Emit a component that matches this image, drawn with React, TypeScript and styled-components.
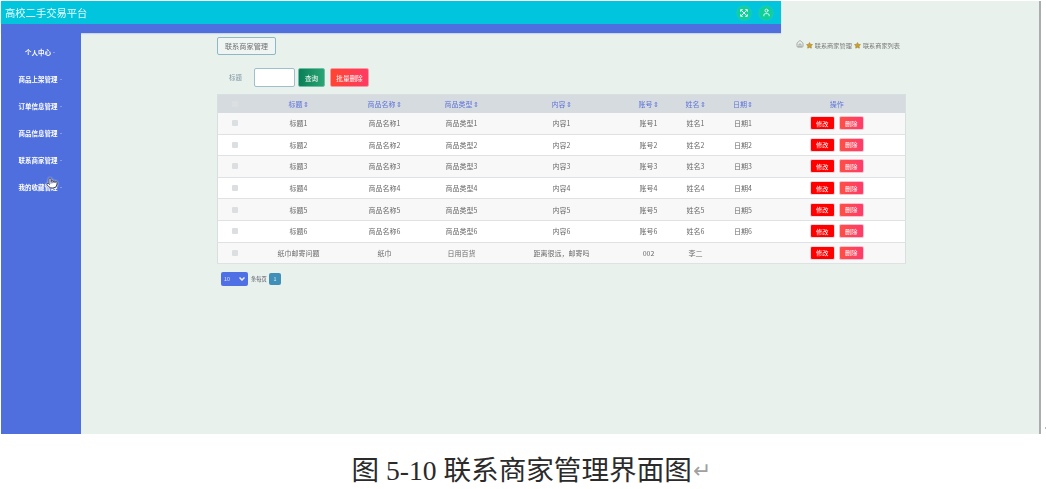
import React from 'react';
import styled, { createGlobalStyle } from 'styled-components';
import { House, Pointer, Star, User } from 'lucide-react';

const sans = '"Noto Sans CJK SC", "Noto Sans", sans-serif';

const GlobalStyle = createGlobalStyle`
  body {
    margin: 0;
    background: #fff;
    font-family: ${sans};
  }
`;

const Page = styled.div`
  width: 1046px;
  height: 489px;
  overflow: hidden;
  position: relative;
`;

const Shot = styled.div`
  width: 1040px;
  height: 433px;
  margin: 1px 0 0 1px;
  box-sizing: border-box;
  display: flex;
  flex-direction: column;
  background: #e8f1ec;
  border-right: 2px solid #a9adab;
  filter: blur(0.45px);
  position: relative;
`;

const Header = styled.header`
  width: 780px;
  height: 32px;
  flex: none;
  box-sizing: border-box;
  background: #4f6fdf;
  box-shadow: 0 1px 1px #c9d6ea;
`;

const HeaderBar = styled.div`
  height: 23px;
  background: #00c5dc;
  display: flex;
  align-items: center;
  padding: 0 8px 0 4px;
  gap: 8px;
`;

const Brand = styled.div`
  flex: 1;
  color: #fff;
  font-size: 10.3px;
  font-weight: 400;
  opacity: 0.92;
`;

const RoundIcon = styled.span`
  width: 14px;
  height: 14px;
  border-radius: 50%;
  background: #10d09a;
  color: #fff;
  display: flex;
  align-items: center;
  justify-content: center;
  box-shadow: 0 0 2px #3bd0b0;
`;

const ExpandIcon = styled.svg`
  width: 8px;
  height: 8px;
  fill: none;
  stroke: #fff;
  stroke-width: 1.5;
`;

const Body = styled.div`
  flex: 1;
  display: flex;
  min-height: 0;
`;

const Sidebar = styled.nav`
  width: 80px;
  flex: none;
  margin-top: -8px;
  padding: 13px 2px 0 0;
  box-sizing: border-box;
  background: #4f6fdf;
  display: flex;
  flex-direction: column;
`;

const MenuItem = styled.div`
  height: 27px;
  display: flex;
  align-items: center;
  justify-content: center;
  gap: 2px;
  color: #fff;
  font-size: 6.5px;
  font-weight: 700;
`;

const Caret = styled.i`
  width: 0;
  height: 0;
  border: 1.5px solid transparent;
  border-top-color: #b9c6f2;
  margin-top: 2px;
`;

const Hand = styled.span`
  position: absolute;
  left: 45px;
  top: 176px;
  color: #223;
  display: flex;
  filter: drop-shadow(0 0 1px #fff);
  & svg {
    fill: #fff;
  }
`;

const Main = styled.main`
  flex: 1;
  padding: 4px 0 0 136px;
`;

const Panel = styled.div`
  width: 688px;
`;

const TopRow = styled.div`
  display: flex;
  justify-content: space-between;
  align-items: flex-start;
  padding-right: 5px;
`;

const TabButton = styled.div`
  width: 59px;
  height: 18px;
  box-sizing: border-box;
  border: 1px solid #8fb8c4;
  border-radius: 2px;
  background: #eef5f2;
  color: #707070;
  font-size: 7.2px;
  display: flex;
  align-items: center;
  justify-content: center;
`;

const Breadcrumb = styled.div`
  display: flex;
  align-items: center;
  gap: 2px;
  margin-top: 4px;
  color: #777;
  font-size: 6.2px;
  & svg.star {
    color: #a8852a;
    fill: #c9a034;
  }
  & svg.home {
    color: #666;
    margin-top: -3px;
  }
`;

const FilterRow = styled.div`
  display: flex;
  align-items: center;
  margin: 13px 0 7px;
  height: 19px;
`;

const FilterLabel = styled.label`
  width: 37px;
  padding-left: 12px;
  box-sizing: border-box;
  color: #7e95a3;
  font-size: 6.4px;
`;

const FilterInput = styled.input`
  width: 41px;
  height: 19px;
  box-sizing: border-box;
  padding: 0;
  border: 1px solid #9dc0cc;
  border-radius: 2px;
  background: #fff;
  margin-right: 3px;
`;

const ActionButton = styled.button<{ $tone: 'search' | 'bulk' }>`
  height: 19px;
  width: ${p => (p.$tone === 'search' ? 27 : 39)}px;
  margin-right: 5px;
  padding: 0;
  border: 1px solid ${p => (p.$tone === 'search' ? '#6fbfa8' : '#f59aa8')};
  border-radius: 2px;
  color: #fff;
  font-family: ${sans};
  font-size: 6.6px;
  background: ${p =>
    p.$tone === 'search'
      ? 'linear-gradient(90deg, #0a7f58, #2aa573)'
      : 'linear-gradient(90deg, #ff4530, #ff3b63)'};
`;

const Table = styled.table`
  width: 688px;
  table-layout: fixed;
  border-collapse: collapse;
  background: #fff;
  border: 1px solid #d9dee1;
  font-size: 7px;
  color: #6a6a6a;
`;

const Col = styled.col<{ $w: number }>`
  width: ${p => p.$w}px;
`;

const Th = styled.th`
  height: 18px;
  padding: 0;
  background: #d6dbe0;
  color: #5f74d8;
  font-weight: 400;
  text-align: center;
`;

const Tr = styled.tr<{ $odd: boolean }>`
  background: ${p => (p.$odd ? '#f8f8f9' : '#fff')};
  border-bottom: 1px solid #dfe2e5;
`;

const Td = styled.td`
  height: 20.6px;
  padding: 0;
  text-align: center;
  white-space: nowrap;
`;

const CheckBox = styled.span`
  display: block;
  width: 6px;
  height: 6px;
  margin: 0 auto;
  background: #dcdfe2;
  border-radius: 1px;
`;

const RowButton = styled.button<{ $tone: 'edit' | 'remove' }>`
  width: 25px;
  height: 14px;
  padding: 0;
  border: 1px solid ${p => (p.$tone === 'edit' ? '#f3d5dc' : '#f6c4d0')};
  border-radius: 2px;
  color: #fff;
  font-family: ${sans};
  font-size: 6.2px;
  vertical-align: middle;
  background: ${p =>
    p.$tone === 'edit' ? '#ff0000' : 'linear-gradient(90deg, #ff4f45, #ff3b6b)'};
  & + & {
    margin-left: 4px;
  }
`;

const Pager = styled.div`
  display: flex;
  align-items: center;
  margin-top: 8px;
  padding-left: 4px;
  color: #556;
  font-size: 5.3px;
`;

const PageSize = styled.div`
  width: 27px;
  height: 14px;
  box-sizing: border-box;
  padding: 0 3px;
  border-radius: 2px;
  background: #4f6fe4;
  color: #dfe6ff;
  display: flex;
  align-items: center;
  justify-content: space-between;
  margin-right: 3px;
`;

const Chevron = styled.svg`
  width: 6px;
  height: 4px;
  fill: none;
  stroke: #e8edff;
  stroke-width: 1.5;
`;

const PageNum = styled.span`
  width: 12px;
  height: 12px;
  margin-left: 2px;
  border-radius: 2px;
  background: #3f8fb8;
  color: #d4ecf6;
  display: flex;
  align-items: center;
  justify-content: center;
`;

const Caption = styled.p`
  margin: 19px 0 0 351.5px;
  color: #2b2b2b;
  font-family: "Liberation Serif", "Noto Sans CJK SC", serif;
  font-size: 27.6px;
  line-height: 36px;
  white-space: nowrap;
  display: flex;
  align-items: center;
`;

const ReturnMark = styled.span`
  color: #a0a0a0;
  font-family: "DejaVu Sans", sans-serif;
  font-size: 22px;
  line-height: 36px;
  margin-left: 1px;
`;

const EdgeMark = styled.span`
  position: absolute;
  left: 1043px;
  top: 426px;
  width: 0;
  height: 0;
  border: 2.5px solid transparent;
  border-right-color: #777;
`;

const menu = ['个人中心', '商品上架管理', '订单信息管理', '商品信息管理', '联系商家管理', '我的收藏管理'];
const columns = ['标题', '商品名称', '商品类型', '内容', '账号', '姓名', '日期'];
const widths = [34, 94, 78, 76, 124, 50, 44, 51, 137];

const rows = [1, 2, 3, 4, 5, 6].map(n => columns.map(c => `${c}${n}`));
rows.push(['纸巾邮寄问题', '纸巾', '日用百货', '距离很远，邮寄吗', '002', '李二', '']);

export default function App() {
  return (
    <Page>
      <GlobalStyle />
      <Shot>
        <Header>
          <HeaderBar>
            <Brand>高校二手交易平台</Brand>
            <RoundIcon>
              <ExpandIcon viewBox="0 0 12 12">
                <path d="M2 2l8 8M10 2l-8 8M1 4V1h3M8 1h3v3M11 8v3H8M4 11H1V8" />
              </ExpandIcon>
            </RoundIcon>
            <RoundIcon>
              <User size={9} strokeWidth={2.2} />
            </RoundIcon>
          </HeaderBar>
        </Header>
        <Body>
          <Sidebar>
            {menu.map(item => (
              <MenuItem key={item}>
                {item}
                <Caret />
              </MenuItem>
            ))}
          </Sidebar>
          <Hand>
            <Pointer size={12} strokeWidth={1.6} />
          </Hand>
          <Main>
            <Panel>
              <TopRow>
                <TabButton>联系商家管理</TabButton>
                <Breadcrumb>
                  <House className="home" size={8} strokeWidth={1.5} />
                  <Star className="star" size={7} />
                  <span>联系商家管理</span>
                  <Star className="star" size={7} />
                  <span>联系商家列表</span>
                </Breadcrumb>
              </TopRow>
              <FilterRow>
                <FilterLabel>标题</FilterLabel>
                <FilterInput />
                <ActionButton $tone="search">查询</ActionButton>
                <ActionButton $tone="bulk">批量删除</ActionButton>
              </FilterRow>
              <Table>
                <colgroup>
                  {widths.map((w, i) => (
                    <Col key={i} $w={w} />
                  ))}
                </colgroup>
                <thead>
                  <tr>
                    <Th>
                      <CheckBox />
                    </Th>
                    {columns.map(c => (
                      <Th key={c}>{c}⇕</Th>
                    ))}
                    <Th>操作</Th>
                  </tr>
                </thead>
                <tbody>
                  {rows.map((row, i) => (
                    <Tr key={i} $odd={i % 2 === 0}>
                      <Td>
                        <CheckBox />
                      </Td>
                      {row.map((cell, j) => (
                        <Td key={j}>{cell}</Td>
                      ))}
                      <Td>
                        <RowButton $tone="edit">修改</RowButton>
                        <RowButton $tone="remove">删除</RowButton>
                      </Td>
                    </Tr>
                  ))}
                </tbody>
              </Table>
              <Pager>
                <PageSize>
                  10
                  <Chevron viewBox="0 0 6 4">
                    <path d="M0.5 0.5 3 3 5.5 0.5" />
                  </Chevron>
                </PageSize>
                条每页
                <PageNum>1</PageNum>
              </Pager>
            </Panel>
          </Main>
        </Body>
      </Shot>
      <EdgeMark />
      <Caption>
        图 5-10 联系商家管理界面图
        <ReturnMark>↵</ReturnMark>
      </Caption>
    </Page>
  );
}
